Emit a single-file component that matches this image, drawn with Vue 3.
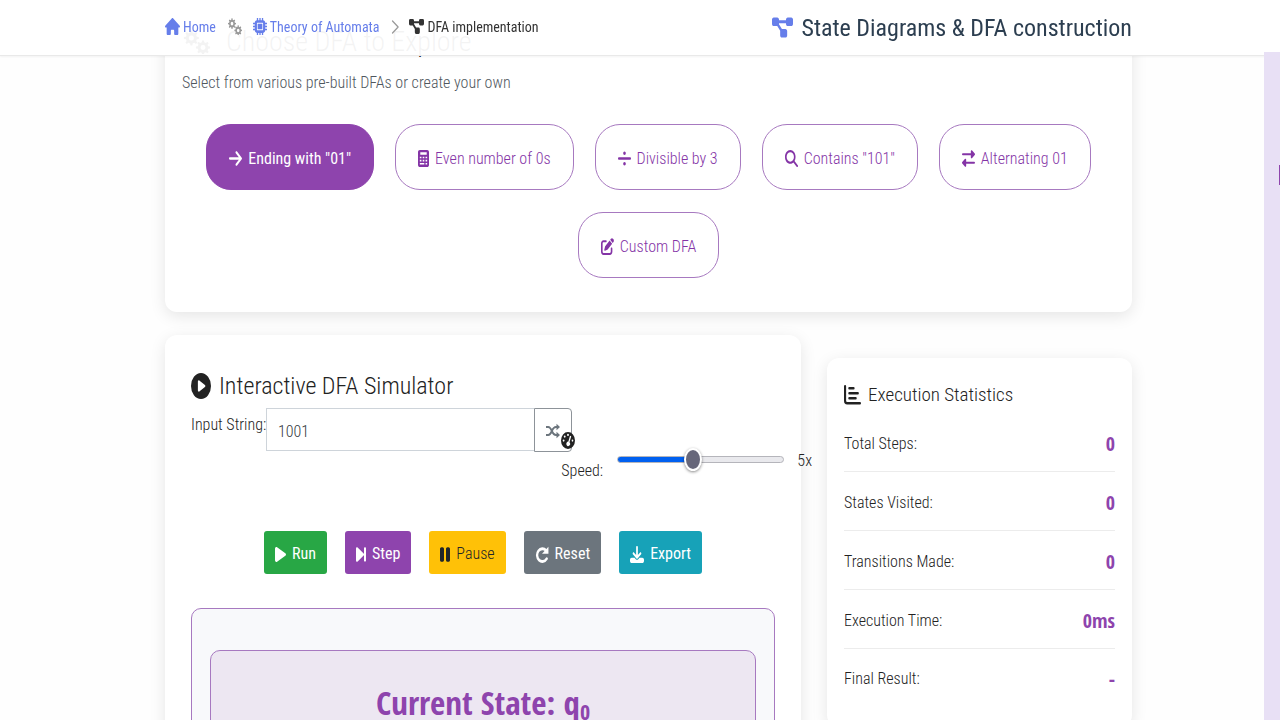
<script setup>
import { ref, computed, h } from 'vue'

const HOME = 'M575.8 255.5c0 18-15 32.1-32 32.1h-32l.7 160.2c0 2.7-.2 5.4-.5 8.1V472c0 22.1-17.9 40-40 40H456c-1.1 0-2.2 0-3.3-.1c-1.4 .1-2.8 .1-4.2 .1H416 392c-22.1 0-40-17.9-40-40V448 384c0-17.700-14.300-32-32-32H256c-17.700 0-32 14.300-32 32v64 24c0 22.100-17.900 40-40 40H160 128.100c-1.500 0-3-.1-4.500-.2c-1.200 .1-2.400 .2-3.600 .2H104c-22.100 0-40-17.900-40-40V360c0-.9 0-1.900 .1-2.800V287.600H32c-18 0-32-14-32-32.100c0-9 3-17 10-24L266.400 8c7-7 15-8 22-8s15 2 21 7L564.800 231.500c8 7 12 15 11 24z'
const DIAGRAM = 'M0 80C0 53.500 21.500 32 48 32h96c26.500 0 48 21.500 48 48V96H384V80c0-26.500 21.500-48 48-48h96c26.500 0 48 21.500 48 48v96c0 26.500-21.500 48-48 48H432c-26.500 0-48-21.500-48-48V160H192v16c0 1.700-.1 3.400-.3 5L272 288h96c26.500 0 48 21.500 48 48v96c0 26.500-21.500 48-48 48H272c-26.500 0-48-21.500-48-48V336c0-1.700 .1-3.400 .3-5L144 224H48c-26.500 0-48-21.500-48-48V80z'

/* each glyph: [viewBox, filled path, stroked path, stroke width] */
const glyphs = {
  home: ['0 0 576 512', HOME],
  diagram: ['0 0 576 512', DIAGRAM],
  gears: ['0 0 640 512', 'M180 10h40l8 44 34 14 36-26 30 30-26 36 14 34 44 8v40l-44 8-14 34 26 36-30 30-36-26-34 14-8 44h-40l-8-44-34-14-36 26-30-30 26-36-14-34-44-8v-40l44-8 14-34-26-36 30-30 36 26 34-14zM200 116a54 54 0 1 0 0 108 54 54 0 1 0 0-108zM428 222h40l8 40 32 14 34-24 28 28-24 34 14 32 40 8v40l-40 8-14 32 24 34-28 28-34-24-32 14-8 32h-40l-8-32-32-14-34 24-28-28 24-34-14-32-40-8v-40l40-8 14-32-24-34 28-28 34 24 32-14zM448 322a52 52 0 1 0 0 104 52 52 0 1 0 0-104z'],
  chip: ['0 0 512 512', 'M140 0h48v64h44V0h48v64h44V0h48v64c42 4 72 34 76 76h64v48h-64v44h64v48h-64v44h64v48h-64c-4 42-34 72-76 76v64h-48v-64h-44v64h-48v-64h-44v64h-48v-64c-42-4-72-34-76-76H0v-48h64v-44H0v-48h64v-44H0v-48h64c4-42 34-72 76-76zM160 144a16 16 0 0 0-16 16v192a16 16 0 0 0 16 16h192a16 16 0 0 0 16-16V160a16 16 0 0 0-16-16zM170 170h172v172H170z'],
  chevron: ['0 0 16 24', '', 'M4 3l9 9-9 9', 2],
  arrow: ['0 32 448 448', 'M438.600 278.600c12.500-12.500 12.500-32.800 0-45.300l-160-160c-12.500-12.500-32.800-12.500-45.300 0s-12.500 32.800 0 45.300L338.800 224 32 224c-17.700 0-32 14.300-32 32s14.300 32 32 32l306.700 0L233.400 393.400c-12.500 12.500-12.500 32.800 0 45.300s32.800 12.500 45.300 0l160-160z'],
  calculator: ['0 0 384 512', 'M64 0C28.700 0 0 28.700 0 64v384c0 35.300 28.700 64 64 64h256c35.300 0 64-28.700 64-64V64c0-35.300-28.700-64-64-64zM80 64h224v80H80zM64 200h56v48H64zM164 200h56v48h-56zM264 200h56v48h-56zM64 296h56v48H64zM164 296h56v48h-56zM264 296h56v48h-56zM64 392h156v48H64zM264 392h56v48h-56z'],
  divide: ['0 32 448 448', 'M224 72a46 46 0 1 1 0 92 46 46 0 1 1 0-92zM32 224h384a32 32 0 0 1 0 64H32a32 32 0 0 1 0-64zM224 348a46 46 0 1 1 0 92 46 46 0 1 1 0-92z'],
  search: ['0 0 512 512', 'M416 208c0 45.900-14.900 88.300-40 122.700L502.600 457.400c12.500 12.500 12.500 32.800 0 45.300s-32.800 12.500-45.300 0L330.700 376c-34.400 25.200-76.800 40-122.700 40C93.100 416 0 322.900 0 208S93.100 0 208 0S416 93.100 416 208zM208 352a144 144 0 1 0 0-288 144 144 0 1 0 0 288z'],
  swap: ['0 0 448 512', 'M438.600 150.600c12.500-12.500 12.500-32.800 0-45.300l-96-96C330 0 304 8 304 32v64H32a32 32 0 0 0 0 64h272v64c0 24 26 32 38.600 22.600zM9.400 361.400c-12.500 12.500-12.500 32.800 0 45.300l96 96C118 512 144 504 144 480v-64h272a32 32 0 0 0 0-64H144v-64c0-24-26-32-38.600-22.600z'],
  edit: ['0 0 512 512', 'M471.600 21.700c-21.900-21.900-57.300-21.900-79.200 0L362.300 51.700l97.900 97.900 30.100-30.100c21.900-21.900 21.900-57.300 0-79.200L471.600 21.700zm-299.200 220c-6.100 6.100-10.800 13.600-13.500 21.900l-29.600 88.800c-2.900 8.600-.6 18.100 5.800 24.600s15.900 8.700 24.600 5.800l88.800-29.600c8.200-2.700 15.700-7.400 21.900-13.500L437.700 172.300 339.700 74.300 172.400 241.700zM96 64C43 64 0 107 0 160V416c0 53 43 96 96 96H352c53 0 96-43 96-96V320c0-17.700-14.300-32-32-32s-32 14.300-32 32v96c0 17.700-14.300 32-32 32H96c-17.700 0-32-14.300-32-32V160c0-17.700 14.300-32 32-32h96c17.700 0 32-14.300 32-32s-14.300-32-32-32H96z'],
  playCircle: ['0 0 512 512', 'M0 256a256 256 0 1 1 512 0A256 256 0 1 1 0 256zM188.300 147.100c-7.600 4.200-12.300 12.300-12.300 20.900V344c0 8.700 4.700 16.700 12.300 20.900s16.800 4.100 24.300-.5l144-88c7.100-4.400 11.500-12.100 11.500-20.500s-4.400-16.100-11.500-20.500l-144-88c-7.400-4.500-16.700-4.700-24.300-.5z'],
  shuffle: ['0 0 24 24', 'M18 1l6 5-6 5zM18 13l6 5-6 5z', 'M0 6h4c3 0 4 2 6 6s4 6 7 6h2M0 18h4c3 0 4-2 6-6s4-6 7-6h2', 3],
  gauge: ['0 0 512 512', 'M256 0a256 256 0 1 1 0 512 256 256 0 1 1 0-512zM256 56a34 34 0 1 0 0 68 34 34 0 1 0 0-68zM136 104a34 34 0 1 0 0 68 34 34 0 1 0 0-68zM96 224a34 34 0 1 0 0 68 34 34 0 1 0 0-68zM416 224a34 34 0 1 0 0 68 34 34 0 1 0 0-68zM330 110l-64 180a68 68 0 1 0 44 20l66-180z'],
  play: ['0 0 384 512', 'M73 39c-14.800-9.100-33.400-9.400-48.500-.9S0 62.600 0 80V432c0 17.400 9.400 33.400 24.500 41.900s33.700 8.100 48.500-.9L361 297c14.300-8.700 23-24.200 23-41s-8.700-32.200-23-41L73 39z'],
  step: ['0 32 320 448', 'M52.500 440.600c-9.500 7.900-22.800 9.700-34.100 4.400S0 428.400 0 416V96C0 83.600 7.200 72.300 18.400 67s24.500-3.600 34.100 4.400l192 160L256 241V96c0-17.700 14.300-32 32-32s32 14.300 32 32V416c0 17.700-14.300 32-32 32s-32-14.300-32-32V271l-11.500 9.600-192 160z'],
  pause: ['0 32 320 448', 'M48 64C21.500 64 0 85.500 0 112V400c0 26.500 21.500 48 48 48H80c26.500 0 48-21.500 48-48V112c0-26.500-21.500-48-48-48H48zm192 0c-26.500 0-48 21.500-48 48V400c0 26.500 21.500 48 48 48h32c26.500 0 48-21.500 48-48V112c0-26.500-21.500-48-48-48H240z'],
  reset: ['0 0 24 24', 'M23 1v10H12z', 'M19 6.500A9 9 0 1 0 20 18', 4],
  download: ['0 0 512 512', 'M288 32c0-17.700-14.300-32-32-32s-32 14.300-32 32V274.700l-73.400-73.400c-12.500-12.500-32.800-12.500-45.300 0s-12.500 32.800 0 45.300l128 128c12.500 12.500 32.800 12.500 45.300 0l128-128c12.500-12.500 12.500-32.800 0-45.300s-32.800-12.500-45.300 0L288 274.700V32zM64 352c-35.300 0-64 28.700-64 64v32c0 35.300 28.700 64 64 64H448c35.300 0 64-28.700 64-64V416c0-35.300-28.700-64-64-64H346.500l-45.300 45.300c-25 25-65.500 25-90.500 0L165.500 352H64z'],
  bars: ['0 0 24 24', '', 'M1.500 1.500v17.500q0 3 3 3H22.500M7.500 4h6M7.500 10h12M7.500 16h9', 3]
}

const Glyph = (props) => {
  const [viewBox, fill, stroke, width] = glyphs[props.name]
  return h('svg', { viewBox, preserveAspectRatio: 'none', 'aria-hidden': 'true' }, [
    fill ? h('path', { d: fill, fill: 'currentColor', 'fill-rule': 'evenodd' }) : null,
    stroke
      ? h('path', { d: stroke, fill: 'none', stroke: 'currentColor', 'stroke-width': width, 'stroke-linecap': 'round', 'stroke-linejoin': 'round' })
      : null
  ])
}
Glyph.props = ['name']

const automata = [
  { icon: 'arrow', label: 'Ending with "01"' },
  { icon: 'calculator', label: 'Even number of 0s' },
  { icon: 'divide', label: 'Divisible by 3' },
  { icon: 'search', label: 'Contains "101"' },
  { icon: 'swap', label: 'Alternating 01' },
  { icon: 'edit', label: 'Custom DFA' }
]
const selected = ref(0)
const input = ref('1001')
const speed = ref(5)
const fillWidth = computed(() => ((speed.value - 1) / 9) * 100 + '%')

const actions = [
  { icon: 'play', label: 'Run', kind: 'run' },
  { icon: 'step', label: 'Step', kind: 'step' },
  { icon: 'pause', label: 'Pause', kind: 'pause' },
  { icon: 'reset', label: 'Reset', kind: 'reset' },
  { icon: 'download', label: 'Export', kind: 'export' }
]
const stats = [
  { label: 'Total Steps:', value: '0' },
  { label: 'States Visited:', value: '0' },
  { label: 'Transitions Made:', value: '0' },
  { label: 'Execution Time:', value: '0ms' },
  { label: 'Final Result:', value: '-' }
]

const shuffle = () => {
  input.value = Array.from({ length: 4 }, () => Math.round(Math.random())).join('')
}
</script>

<template>
  <div class="page">
    <header class="topbar">
      <nav class="crumbs" aria-label="Breadcrumb">
        <a href="#home"><Glyph name="home" class="ic" />Home</a>
        <Glyph name="gears" class="ic sep-gears" />
        <a href="#theory"><Glyph name="chip" class="ic chip" />Theory of Automata</a>
        <Glyph name="chevron" class="sep" />
        <span class="here"><Glyph name="diagram" class="ic" />DFA implementation</span>
      </nav>
      <h1><Glyph name="diagram" class="brand" />State Diagrams &amp; DFA construction</h1>
    </header>

    <main>
      <section class="card chooser">
        <h2><Glyph name="gears" class="head-gears" />Choose DFA to Explore</h2>
        <p>Select from various pre-built DFAs or create your own</p>
        <div class="pills">
          <button
            v-for="(a, i) in automata"
            :key="a.label"
            type="button"
            class="pill"
            :class="{ active: i === selected }"
            @click="selected = i"
          >
            <Glyph :name="a.icon" :class="['pill-ic', a.icon]" />{{ a.label }}
          </button>
        </div>
      </section>

      <div class="columns">
        <section class="card simulator">
          <h2><Glyph name="playCircle" class="head-play" />Interactive DFA Simulator</h2>
          <div class="controls">
            <label class="input-label" for="dfa-input">Input String:</label>
            <div class="group">
              <input id="dfa-input" v-model="input" type="text" />
              <button type="button" aria-label="Random string" @click="shuffle"><Glyph name="shuffle" class="shuffle" /></button>
            </div>
            <label class="speed-label" for="dfa-speed"><Glyph name="gauge" class="gauge" />Speed:</label>
            <input id="dfa-speed" v-model.number="speed" class="range" type="range" min="1" max="10" :style="{ '--fill': fillWidth }" />
            <span class="speed-value">{{ speed }}x</span>
          </div>
          <div class="actions">
            <button v-for="a in actions" :key="a.label" type="button" :class="['action', a.kind]">
              <Glyph :name="a.icon" :class="['act-ic', 'g-' + a.icon]" />{{ a.label }}
            </button>
          </div>
          <div class="stage">
            <div class="state">Current State: q<sub>0</sub></div>
          </div>
        </section>

        <aside class="card stats">
          <h2><Glyph name="bars" class="head-bars" />Execution Statistics</h2>
          <dl>
            <div v-for="s in stats" :key="s.label" class="stat">
              <dt>{{ s.label }}</dt>
              <dd>{{ s.value }}</dd>
            </div>
          </dl>
        </aside>
      </div>
    </main>
    <div class="track"><div class="thumb"></div></div>
  </div>
</template>

<style>
html,
body {
  height: 100%;
  overflow: hidden;
  background: #fefefe;
}
</style>

<style scoped>
* {
  box-sizing: border-box;
}
.page {
  font-family: "Roboto Condensed", Roboto, "Open Sans", sans-serif;
  font-size: 16px;
  font-weight: 300;
  line-height: 20px;
  color: #222;
}
h1,
h2,
p,
dl,
dd {
  margin: 0;
}
h2 {
  font-weight: 300;
  display: flex;
  align-items: center;
}
svg {
  flex: none;
}
button,
input {
  font: inherit;
}
button {
  cursor: pointer;
}
.topbar {
  position: fixed;
  inset: 0 0 auto 0;
  z-index: 5;
  height: 56px;
  padding: 0 148px 0 165px;
  display: flex;
  justify-content: space-between;
  align-items: center;
  background: rgba(255, 255, 255, 0.95);
  border-bottom: 1px solid #e9e9e9;
  box-shadow: 0 1px 2px rgba(0, 0, 0, 0.05);
}
.crumbs {
  display: flex;
  align-items: center;
  padding-bottom: 2px;
  font-size: 14px;
  font-weight: 400;
}
.crumbs a,
.here {
  display: flex;
  align-items: center;
  gap: 3px;
  color: #667eea;
  text-decoration: none;
}
.crumbs .here {
  color: #333;
}
.ic {
  width: 15px;
  height: 17px;
}
.chip {
  width: 14px;
}
.sep-gears {
  margin: 0 10px 0 11px;
  width: 16px;
  color: #999;
}
.sep {
  width: 10px;
  height: 16px;
  margin: 0 9px 0 11px;
  color: #999;
}
h1 {
  display: flex;
  align-items: center;
  gap: 8px;
  font-size: 24px;
  line-height: 30px;
  font-weight: 400;
  color: #2c3e50;
}
.brand {
  width: 21px;
  height: 23px;
  color: #667eea;
}
main {
  padding: 0 148px 0 165px;
}
.card {
  background: #fff;
  border-radius: 12px;
  box-shadow: 0 4px 16px rgba(0, 0, 0, 0.1);
}
.chooser {
  padding: 27px 17px 34px;
  border-radius: 0 0 12px 12px;
}
.chooser h2 {
  gap: 14px;
  font-size: 28px;
  line-height: 30px;
}
.head-gears {
  width: 30px;
  height: 24px;
}
.chooser p {
  margin-top: 16px;
  color: #50575e;
}
.pills {
  display: flex;
  flex-wrap: wrap;
  justify-content: center;
  gap: 22px 21px;
  padding-top: 31px;
}
.pill {
  display: flex;
  align-items: center;
  gap: 6px;
  height: 66px;
  padding: 3px 22px 0;
  color: #8434a6;
  background: #fff;
  border: 1px solid #a779c0;
  border-radius: 25px;
}
.pill.active {
  color: #fff;
  font-weight: 400;
  background: #8e44ad;
  border-color: #8e44ad;
}
.pill-ic {
  width: 13px;
  height: 17px;
}
.pill-ic.calculator {
  width: 11px;
}
.columns {
  display: grid;
  grid-template-columns: 636fr 305fr;
  gap: 26px;
  margin-top: 23px;
  align-items: start;
}
.simulator {
  padding: 34px 26px;
}
.simulator h2 {
  gap: 8px;
  font-size: 24px;
  line-height: 34px;
}
.head-play {
  width: 20px;
  height: 26px;
  color: #222;
}
.controls {
  display: flex;
  align-items: flex-start;
  padding-top: 5px;
  height: 128px;
}
.input-label {
  width: 75px;
  padding-top: 7px;
  white-space: nowrap;
}
.group {
  display: flex;
  flex: 1 1 0;
}
.group input {
  flex: 1;
  min-width: 0;
  height: 43px;
  padding: 3px 11px 0;
  color: #343a40;
  border: 1px solid #ced4da;
  border-right: 0;
  background: #fff;
  outline: 0;
}
.group button {
  width: 38px;
  height: 44px;
  padding: 0;
  background: #fff;
  border: 1px solid #8d9399;
  border-radius: 0 4px 4px 0;
  color: #6c757d;
}
.shuffle {
  width: 14px;
  height: 16px;
  vertical-align: middle;
}
.speed-label {
  position: relative;
  z-index: 1;
  display: flex;
  flex-direction: column;
  gap: 12px;
  width: 43px;
  margin: 24px 13px 0 -11px;
}
.gauge {
  width: 14px;
  height: 17px;
  color: #222;
}
.range {
  appearance: none;
  width: 167px;
  height: 24px;
  margin: 39px 0 0;
  background: transparent;
}
.range::-webkit-slider-runnable-track {
  height: 7px;
  border: 1px solid #b5b5bb;
  border-radius: 4px;
  background: linear-gradient(#0060f0, #0060f0) 0 0 / var(--fill) 100% no-repeat border-box, #e9e9ed;
}
.range::-webkit-slider-thumb {
  appearance: none;
  width: 18px;
  height: 23px;
  margin-top: -9px;
  border: 2px solid #fff;
  border-radius: 50%;
  background: #67677a;
  box-shadow: 0 1px 3px rgba(0, 0, 0, 0.45);
}
.speed-value {
  margin: 43px -37px 0 13px;
}
.actions {
  display: flex;
  justify-content: center;
  gap: 18px;
}
.action {
  display: flex;
  align-items: center;
  gap: 6px;
  height: 43px;
  padding: 3px 11px 0;
  color: #fff;
  font-weight: 400;
  border: 0;
  border-radius: 3px;
}
.run {
  background: #28a745;
}
.step {
  background: #8e44ad;
}
.pause {
  background: #ffc107;
  color: #212529;
  font-weight: 300;
}
.reset {
  background: #6c757d;
}
.export {
  background: #17a2b8;
}
.act-ic {
  width: 14px;
  height: 17px;
}
.g-play {
  width: 11px;
}
.g-step,
.g-pause {
  width: 10px;
}
.stage {
  margin-top: 34px;
  padding: 41px 18px 60px;
  background: #f8f9fb;
  border: 1px solid #a779c0;
  border-radius: 10px;
}
.state {
  padding: 29px 18px;
  font-family: "Open Sans Condensed", "Roboto Condensed", Roboto, sans-serif;
  font-size: 33px;
  font-weight: 700;
  line-height: 46px;
  text-align: center;
  color: #8e44ad;
  background: #ede7f2;
  border: 1px solid #a779c0;
  border-radius: 10px;
}
.state sub {
  font-size: 22px;
  line-height: 0;
  vertical-align: -5px;
}
.stats {
  margin-top: 23px;
  padding: 22px 17px;
}
.stats h2 {
  gap: 7px;
  font-size: 19px;
  line-height: 30px;
}
.head-bars {
  width: 17px;
  height: 20px;
}
.stats dl {
  margin-top: 3px;
}
.stat {
  display: flex;
  justify-content: space-between;
  align-items: center;
  height: 59px;
  padding-top: 3px;
  border-bottom: 1px solid #ececec;
}
.stat:last-child {
  height: 56px;
  border-bottom: 0;
}
.stat dd {
  font-family: "Open Sans Condensed", "Roboto Condensed", Roboto, sans-serif;
  font-size: 20px;
  font-weight: 700;
  color: #8e44ad;
}
.track {
  position: fixed;
  z-index: 6;
  top: 52px;
  right: 0;
  bottom: 0;
  width: 16px;
  padding-top: 113px;
  background: #e8e0f5;
}
.thumb {
  width: 1px;
  height: 20px;
  margin-left: auto;
  background: #8e44ad;
}
</style>
